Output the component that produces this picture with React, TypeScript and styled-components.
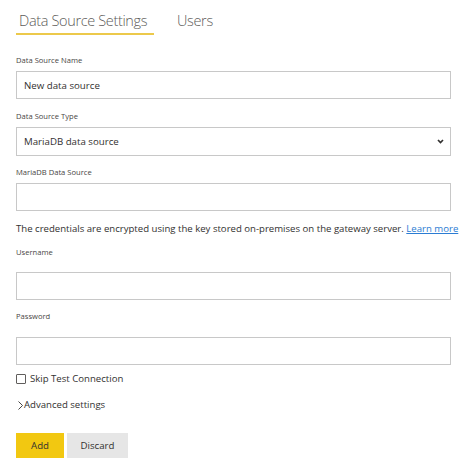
import React, { useState } from 'react';
import styled, { createGlobalStyle } from 'styled-components';

const GlobalStyle = createGlobalStyle`
  html, body {
    margin: 0;
    padding: 0;
    background: #ffffff;
  }
  body {
    font-family: 'Open Sans', 'Noto Sans', Arial, sans-serif;
    color: #323130;
  }
`;

const Page = styled.div`
  width: 474px;
  height: 464px;
  box-sizing: border-box;
  padding: 0 23px 0 16px;
  overflow: hidden;
`;

const Tabs = styled.div`
  display: flex;
  gap: 20px;
  height: 35px;
  align-items: flex-start;
`;

const Tab = styled.button<{ $active?: boolean }>`
  background: none;
  border: none;
  padding: 8px 2px 0 3px;
  height: 35px;
  box-sizing: border-box;
  font-family: inherit;
  font-size: 14.5px;
  letter-spacing: -0.35px;
  font-weight: 300;
  white-space: nowrap;
  color: #5d5b59;
  line-height: 22px;
  cursor: pointer;
  border-bottom: 2px solid ${(p) => (p.$active ? '#ecc94b' : 'transparent')};
  width: ${(p) => (p.$active ? '138px' : 'auto')};
  text-align: left;
`;

const Form = styled.form`
  display: flex;
  flex-direction: column;
`;

const Field = styled.div<{ $top: number; $gap: number }>`
  display: flex;
  flex-direction: column;
  margin-top: ${(p) => p.$top}px;
  gap: ${(p) => p.$gap}px;
`;

const Label = styled.label`
  font-size: 7.6px;
  line-height: 12px;
  color: #484644;
`;

const TextInput = styled.input`
  box-sizing: border-box;
  width: 435px;
  height: 28px;
  border: 1px solid #c8c8c8;
  padding: 0 7px;
  font-family: inherit;
  font-size: 9.7px;
  color: #323130;
  outline: none;
`;

const SelectWrap = styled.div`
  position: relative;
  width: 435px;
`;

const Select = styled.select`
  appearance: none;
  box-sizing: border-box;
  width: 100%;
  height: 29px;
  border: 1px solid #c8c8c8;
  background: #fff;
  padding: 0 7px;
  font-family: inherit;
  font-size: 9.7px;
  color: #323130;
  outline: none;
`;

const Chevron = styled.svg`
  position: absolute;
  right: 7px;
  top: 12px;
  pointer-events: none;
`;

const Note = styled.p`
  margin: 10px 0 0;
  font-size: 9.6px;
  line-height: 16px;
  white-space: nowrap;
  color: #323130;
`;

const Link = styled.a`
  color: #2b7cd3;
  text-decoration: underline;
`;

const CheckRow = styled.label`
  display: flex;
  align-items: center;
  gap: 4px;
  margin-top: 7px;
  font-size: 9.6px;
  line-height: 14px;
  color: #323130;
`;

const Box = styled.input`
  appearance: none;
  width: 10px;
  height: 10px;
  margin: 0;
  border: 1px solid #605e5c;
  border-radius: 1px;
  background: #fff;
`;

const Advanced = styled.div`
  display: flex;
  align-items: center;
  gap: 1px;
  margin-top: 12px;
  padding-left: 2px;
  font-size: 9.6px;
  line-height: 14px;
  color: #323130;
`;

const Buttons = styled.div`
  display: flex;
  gap: 3px;
  margin-top: 21px;
`;

const Button = styled.button<{ $primary?: boolean }>`
  height: 25px;
  padding: 0;
  width: ${(p) => (p.$primary ? '48px' : '61px')};
  border: none;
  font-family: inherit;
  font-size: 9.7px;
  color: #323130;
  background: ${(p) => (p.$primary ? '#f2c811' : '#e6e6e6')};
  cursor: pointer;
`;

export default function App() {
  const [name, setName] = useState('New data source');

  return (
    <Page>
      <GlobalStyle />
      <Tabs>
        <Tab $active>Data Source Settings</Tab>
        <Tab>Users</Tab>
      </Tabs>
      <Form onSubmit={(e) => e.preventDefault()}>
        <Field $top={19} $gap={5}>
          <Label>Data Source Name</Label>
          <TextInput value={name} onChange={(e) => setName(e.target.value)} />
        </Field>
        <Field $top={11} $gap={5}>
          <Label>Data Source Type</Label>
          <SelectWrap>
            <Select defaultValue="mariadb">
              <option value="mariadb">MariaDB data source</option>
            </Select>
            <Chevron width="7" height="5" viewBox="0 0 7 5">
              <path d="M1 1l2.5 2.5L6 1" fill="none" stroke="#323130" strokeWidth="1.7" />
            </Chevron>
          </SelectWrap>
        </Field>
        <Field $top={10} $gap={5}>
          <Label>MariaDB Data Source</Label>
          <TextInput />
        </Field>
        <Note>
          The credentials are encrypted using the key stored on-premises on the gateway server.{' '}
          <Link href="#">Learn more</Link>
        </Note>
        <Field $top={9} $gap={14}>
          <Label>Username</Label>
          <TextInput />
        </Field>
        <Field $top={10} $gap={15}>
          <Label>Password</Label>
          <TextInput type="password" />
        </Field>
        <CheckRow>
          <Box type="checkbox" />
          Skip Test Connection
        </CheckRow>
        <Advanced>
          <svg width="5" height="9" viewBox="0 0 5 9">
            <path d="M0.5 0.5l4 4-4 4" fill="none" stroke="#323130" strokeWidth="0.9" />
          </svg>
          Advanced settings
        </Advanced>
        <Buttons>
          <Button $primary type="submit">Add</Button>
          <Button type="button">Discard</Button>
        </Buttons>
      </Form>
    </Page>
  );
}
